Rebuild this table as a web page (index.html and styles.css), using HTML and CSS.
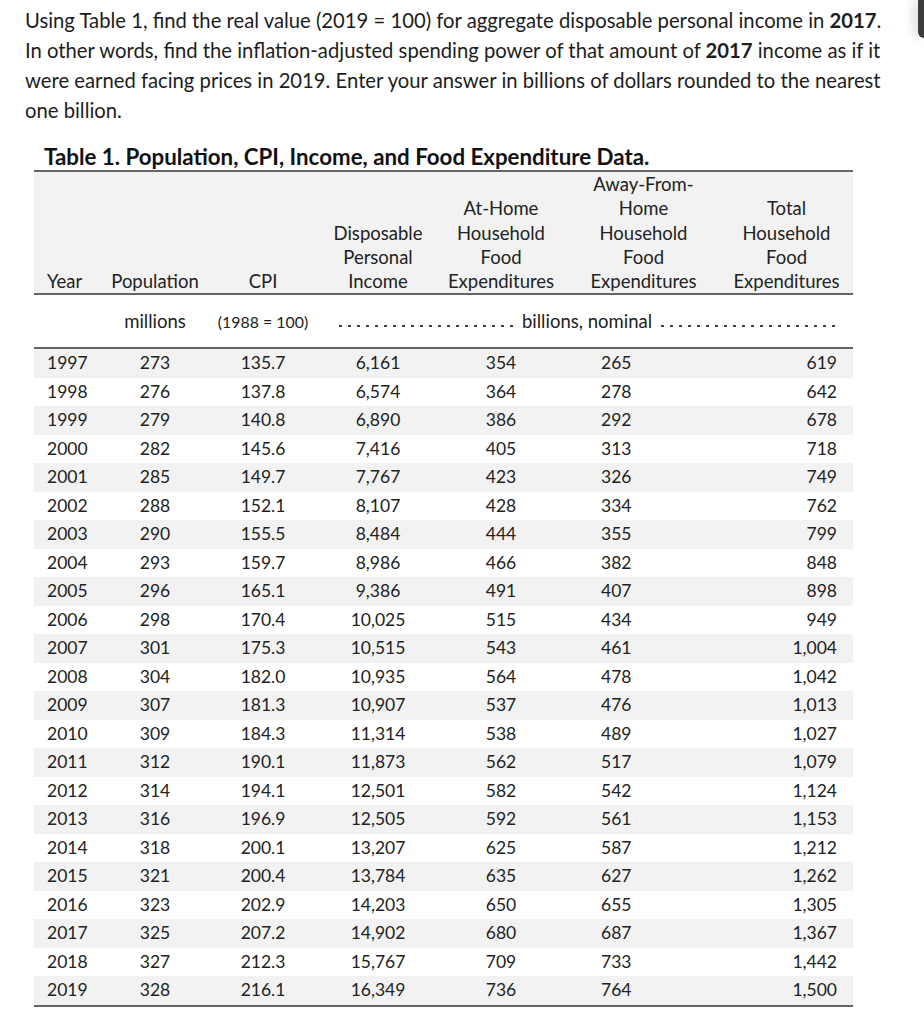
FILE: index.html
```html
<!DOCTYPE html>
<html>
<head>
<meta charset="utf-8">
<link rel="stylesheet" href="styles.css">
</head>
<body>
<div class="scroll-thumb"></div>
<p class="question">Using Table 1, find the real value (2019 = 100) for aggregate disposable personal income in <b>2017</b>. In other words, find the inflation-adjusted spending power of that amount of <b>2017</b> income as if it were earned facing prices in 2019. Enter your answer in billions of dollars rounded to the nearest one billion.</p>
<div class="figure">
  <div class="caption">Table 1. Population, CPI, Income, and Food Expenditure Data.</div>
  <table class="data">
    <colgroup>
      <col class="c-year"><col class="c-pop"><col class="c-cpi"><col class="c-dpi"><col class="c-home"><col class="c-away"><col class="c-total">
    </colgroup>
    <thead>
      <tr class="head">
        <th class="year">Year</th>
        <th>Population</th>
        <th>CPI</th>
        <th>Disposable<br>Personal<br>Income</th>
        <th>At-Home<br>Household<br>Food<br>Expenditures</th>
        <th>Away-From-<br>Home<br>Household<br>Food<br>Expenditures</th>
        <th>Total<br>Household<br>Food<br>Expenditures</th>
      </tr>
      <tr class="units">
        <td></td>
        <td class="ctr">millions</td>
        <td class="ctr small">(1988 = 100)</td>
        <td colspan="4">
          <div class="leader"><span class="dots"></span><span class="leader-text">billions, nominal</span><span class="dots"></span></div>
        </td>
      </tr>
    </thead>
    <tbody>
      <tr><td class="year">1997</td><td class="ctr">273</td><td class="ctr">135.7</td><td class="ctr">6,161</td><td class="ctr">354</td><td class="away">265</td><td class="total">619</td></tr>
      <tr><td class="year">1998</td><td class="ctr">276</td><td class="ctr">137.8</td><td class="ctr">6,574</td><td class="ctr">364</td><td class="away">278</td><td class="total">642</td></tr>
      <tr><td class="year">1999</td><td class="ctr">279</td><td class="ctr">140.8</td><td class="ctr">6,890</td><td class="ctr">386</td><td class="away">292</td><td class="total">678</td></tr>
      <tr><td class="year">2000</td><td class="ctr">282</td><td class="ctr">145.6</td><td class="ctr">7,416</td><td class="ctr">405</td><td class="away">313</td><td class="total">718</td></tr>
      <tr><td class="year">2001</td><td class="ctr">285</td><td class="ctr">149.7</td><td class="ctr">7,767</td><td class="ctr">423</td><td class="away">326</td><td class="total">749</td></tr>
      <tr><td class="year">2002</td><td class="ctr">288</td><td class="ctr">152.1</td><td class="ctr">8,107</td><td class="ctr">428</td><td class="away">334</td><td class="total">762</td></tr>
      <tr><td class="year">2003</td><td class="ctr">290</td><td class="ctr">155.5</td><td class="ctr">8,484</td><td class="ctr">444</td><td class="away">355</td><td class="total">799</td></tr>
      <tr><td class="year">2004</td><td class="ctr">293</td><td class="ctr">159.7</td><td class="ctr">8,986</td><td class="ctr">466</td><td class="away">382</td><td class="total">848</td></tr>
      <tr><td class="year">2005</td><td class="ctr">296</td><td class="ctr">165.1</td><td class="ctr">9,386</td><td class="ctr">491</td><td class="away">407</td><td class="total">898</td></tr>
      <tr><td class="year">2006</td><td class="ctr">298</td><td class="ctr">170.4</td><td class="ctr">10,025</td><td class="ctr">515</td><td class="away">434</td><td class="total">949</td></tr>
      <tr><td class="year">2007</td><td class="ctr">301</td><td class="ctr">175.3</td><td class="ctr">10,515</td><td class="ctr">543</td><td class="away">461</td><td class="total">1,004</td></tr>
      <tr><td class="year">2008</td><td class="ctr">304</td><td class="ctr">182.0</td><td class="ctr">10,935</td><td class="ctr">564</td><td class="away">478</td><td class="total">1,042</td></tr>
      <tr><td class="year">2009</td><td class="ctr">307</td><td class="ctr">181.3</td><td class="ctr">10,907</td><td class="ctr">537</td><td class="away">476</td><td class="total">1,013</td></tr>
      <tr><td class="year">2010</td><td class="ctr">309</td><td class="ctr">184.3</td><td class="ctr">11,314</td><td class="ctr">538</td><td class="away">489</td><td class="total">1,027</td></tr>
      <tr><td class="year">2011</td><td class="ctr">312</td><td class="ctr">190.1</td><td class="ctr">11,873</td><td class="ctr">562</td><td class="away">517</td><td class="total">1,079</td></tr>
      <tr><td class="year">2012</td><td class="ctr">314</td><td class="ctr">194.1</td><td class="ctr">12,501</td><td class="ctr">582</td><td class="away">542</td><td class="total">1,124</td></tr>
      <tr><td class="year">2013</td><td class="ctr">316</td><td class="ctr">196.9</td><td class="ctr">12,505</td><td class="ctr">592</td><td class="away">561</td><td class="total">1,153</td></tr>
      <tr><td class="year">2014</td><td class="ctr">318</td><td class="ctr">200.1</td><td class="ctr">13,207</td><td class="ctr">625</td><td class="away">587</td><td class="total">1,212</td></tr>
      <tr><td class="year">2015</td><td class="ctr">321</td><td class="ctr">200.4</td><td class="ctr">13,784</td><td class="ctr">635</td><td class="away">627</td><td class="total">1,262</td></tr>
      <tr><td class="year">2016</td><td class="ctr">323</td><td class="ctr">202.9</td><td class="ctr">14,203</td><td class="ctr">650</td><td class="away">655</td><td class="total">1,305</td></tr>
      <tr><td class="year">2017</td><td class="ctr">325</td><td class="ctr">207.2</td><td class="ctr">14,902</td><td class="ctr">680</td><td class="away">687</td><td class="total">1,367</td></tr>
      <tr><td class="year">2018</td><td class="ctr">327</td><td class="ctr">212.3</td><td class="ctr">15,767</td><td class="ctr">709</td><td class="away">733</td><td class="total">1,442</td></tr>
      <tr><td class="year">2019</td><td class="ctr">328</td><td class="ctr">216.1</td><td class="ctr">16,349</td><td class="ctr">736</td><td class="away">764</td><td class="total">1,500</td></tr>
    </tbody>
  </table>
</div>
</body>
</html>
```

FILE: styles.css
```css
html, body {
  margin: 0;
  padding: 0;
  background: #ffffff;
}

body {
  padding: 5px 0 0 25px;
  font-family: "Lato", "Carlito", "Open Sans", sans-serif;
  color: #1d1d1d;
  position: relative;
}

.scroll-thumb {
  position: fixed;
  top: 0;
  right: 0;
  width: 6px;
  height: 38px;
  background: #3d3d3d;
  border-bottom-left-radius: 6px;
  box-shadow: -4px 0 10px rgba(0, 0, 0, 0.18);
}

.question {
  margin: 0;
  width: 870px;
  font-size: 20.25px;
  line-height: 30px;
}

.question b {
  font-weight: 700;
}

.figure {
  margin: 20px 0 0 9px;
  width: 819px;
}

.caption {
  font-weight: 700;
  font-size: 22.3px;
  line-height: 24px;
  padding-left: 10px;
  color: #111;
  margin-bottom: 1px;
  white-space: nowrap;
}

.data {
  border-collapse: collapse;
  table-layout: fixed;
  width: 819px;
  font-size: 17.5px;
  color: #222;
  border-top: 2px solid #666;
  border-bottom: 2px solid #666;
}

.c-year { width: 71px; }
.c-pop { width: 100px; }
.c-cpi { width: 116px; }
.c-dpi { width: 114px; }
.c-home { width: 132px; }
.c-away { width: 153px; }
.c-total { width: 133px; }

.data th {
  font-weight: 400;
  font-size: 18.5px;
  text-align: center;
  vertical-align: bottom;
  line-height: 24.3px;
  padding: 0;
  background: #f2f2f2;
  border-bottom: 2px solid #666;
  white-space: nowrap;
}

.data th.year {
  text-align: left;
  padding-left: 13px;
}

.units td {
  height: 52px;
  padding: 0;
  font-size: 18.5px;
  vertical-align: middle;
  border-bottom: 2px solid #666;
}

.units .small {
  font-size: 15.9px;
}

.leader {
  display: flex;
  align-items: baseline;
  gap: 6px;
  padding: 0 15px;
}

.dots {
  flex: 1;
  height: 4px;
  background-image: radial-gradient(circle, #3a3a3a 1.1px, transparent 1.4px);
  background-size: 9px 4px;
  background-repeat: repeat-x;
}

.leader-text {
  white-space: nowrap;
}

.data tbody td {
  padding: 0;
  line-height: 28.5px;
  height: 28.5px;
}

.data tbody tr:nth-child(odd) td {
  background: #f2f2f2;
}

.data td.year {
  text-align: left;
  padding-left: 13px;
}

.data td.ctr {
  text-align: center;
}

.data td.away {
  text-align: left;
  padding-left: 34px;
}

.data td.total {
  text-align: right;
  padding-right: 16px;
}
```
